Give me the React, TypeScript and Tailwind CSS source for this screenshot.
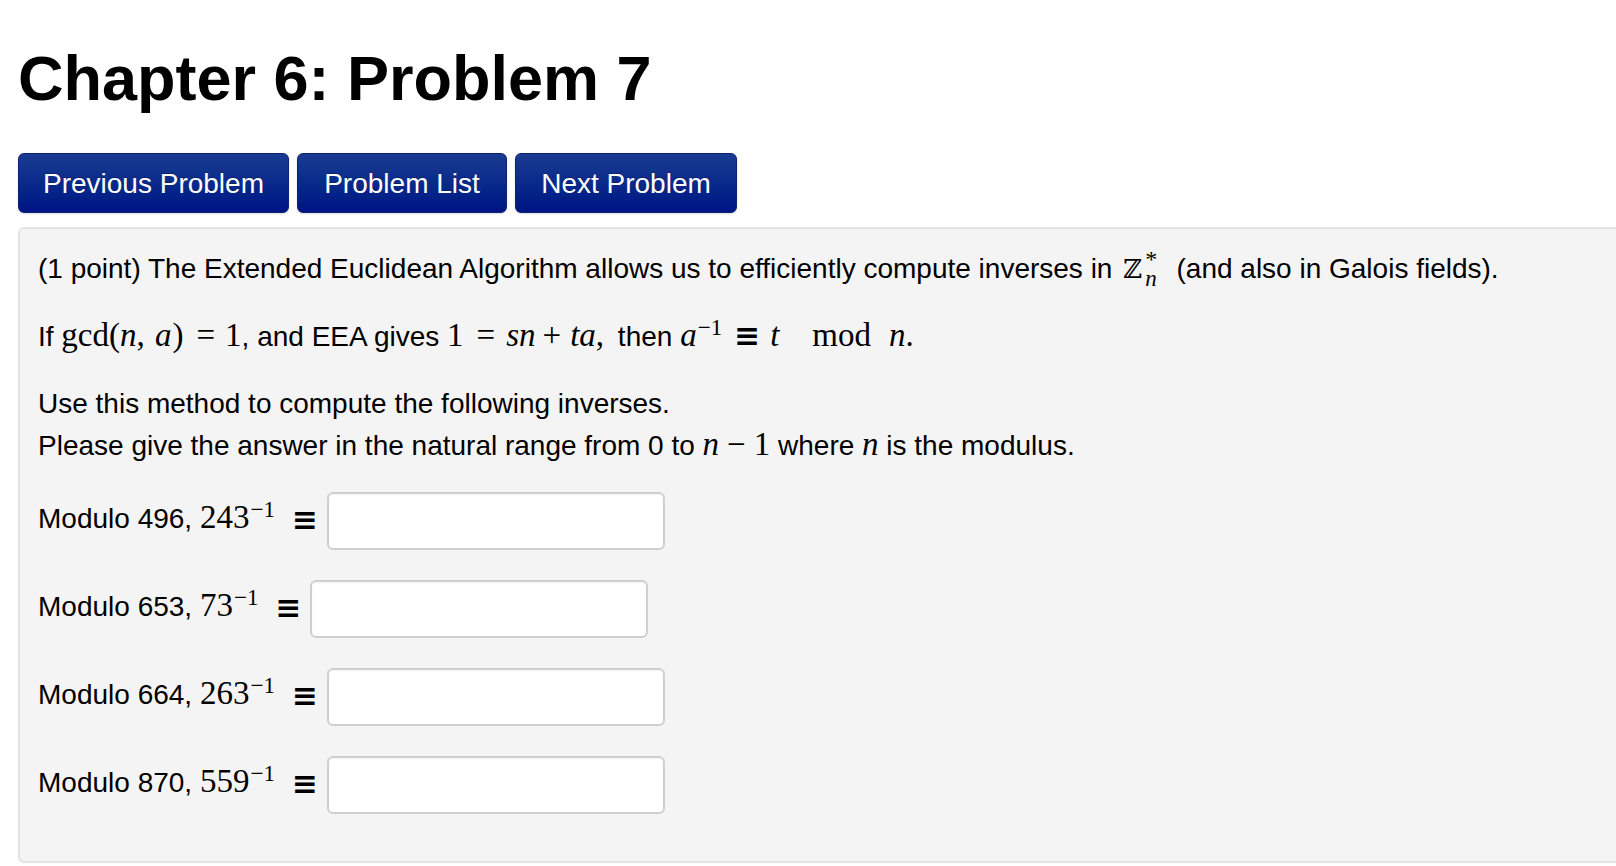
const sans = "font-['Liberation_Sans',Arial,Helvetica,sans-serif]";
const serif = "font-['Liberation_Serif','Times_New_Roman',serif] text-[33px]";
const italic = "font-['Liberation_Serif','Times_New_Roman',serif] text-[33px] italic";

function M({ children, className = "" }: { children: React.ReactNode; className?: string }) {
  return <span className={`${serif} ${className}`}>{children}</span>;
}

function I({ children, className = "" }: { children: React.ReactNode; className?: string }) {
  return <span className={`${italic} ${className}`}>{children}</span>;
}

function Sup({ children }: { children: React.ReactNode }) {
  return (
    <span className="relative -top-[11px] ml-[1px] font-['Liberation_Serif','Times_New_Roman',serif] text-[23px]">
      {children}
    </span>
  );
}

function Equiv({ className = "" }: { className?: string }) {
  return (
    <span className={`font-['DejaVu_Sans',sans-serif] text-[31px] font-bold ${className}`}>≡</span>
  );
}

function Row({ mod, base }: { mod: number; base: number }) {
  return (
    <div className="flex items-center">
      <span className="mb-[5px] whitespace-nowrap">
        Modulo {mod}, <M>{base}</M>
        <Sup>−1</Sup>
      </span>
      <Equiv className="ml-[17px] mb-[4px]" />
      <input
        type="text"
        className="ml-[9px] h-[58px] w-[338px] rounded-[6px] border-2 border-[#cfcfcf] bg-white shadow-[inset_0_1px_2px_rgba(0,0,0,0.06)] outline-none"
      />
    </div>
  );
}

export default function App() {
  return (
    <div className={`min-h-[866px] w-full overflow-hidden bg-white pl-[18px] text-black ${sans}`}>
      <h1 className="mt-[47px] text-[63px] font-bold leading-none">Chapter 6: Problem 7</h1>

      <div className="mt-[43px] flex gap-[8px]">
        {[
          { label: "Previous Problem", w: "w-[271px]" },
          { label: "Problem List", w: "w-[210px]" },
          { label: "Next Problem", w: "w-[222px]" },
        ].map((b) => (
          <button
            key={b.label}
            className={`${b.w} h-[60px] rounded-[6px] border border-[#0b2373] bg-linear-to-b from-[#1a3b90] to-[#001384] pt-[2px] text-[28px] text-white shadow-[0_1px_2px_rgba(0,0,0,0.15)] [text-shadow:0_-1px_0_rgba(0,0,0,0.25)]`}
          >
            {b.label}
          </button>
        ))}
      </div>

      <div className="mt-[14px] w-[1620px] rounded-[6px] border-2 border-[#e4e4e4] bg-[#f4f4f4] px-[18px] pt-[20px] pb-[47px] text-[28px] leading-[40px]">
        <p className="whitespace-nowrap">
          (1 point) The Extended Euclidean Algorithm allows us to efficiently compute inverses in{" "}
          <span className="ml-[3px] font-['DejaVu_Serif',serif] text-[26px]">ℤ</span>
          <span className="relative -top-[11px] ml-[3px] font-['Liberation_Serif',serif] text-[24px]">*</span>
          <span className="relative top-[8px] -ml-[12px] mr-[12px] font-['Liberation_Serif',serif] text-[23px] italic">n</span>{" "}
          (and also in Galois fields).
        </p>

        <p className="mt-[24px] whitespace-nowrap">
          If <M>gcd(</M>
          <I>n</I>
          <M className="mr-[2px]">, </M>
          <I>a</I>
          <M className="ml-[1px]">)</M>
          <span className="ml-[13px] mr-[10px] font-['Liberation_Serif',serif] text-[33px]">=</span>
          <M>1</M>, and EEA gives <M>1</M>
          <span className="ml-[13px] mr-[11px] font-['Liberation_Serif',serif] text-[33px]">=</span>
          <I>sn</I>
          <span className="ml-[7px] mr-[9px] font-['Liberation_Serif',serif] text-[33px]">+</span>
          <I>ta</I>
          <M className="mr-[6px]">,</M> then <I>a</I>
          <Sup>−1</Sup>
          <Equiv className="ml-[12px] mr-[10px]" />
          <I>t</I>
          <M className="ml-[33px]">mod</M>
          <I className="ml-[18px]">n</I>
          <M>.</M>
        </p>

        <p className="mt-[25px] whitespace-nowrap">
          Use this method to compute the following inverses.
          <br />
          Please give the answer in the natural range from 0 to <I>n</I>
          <span className="mx-[8px] font-['Liberation_Serif',serif] text-[33px]">−</span>
          <M>1</M> where <I>n</I> is the modulus.
        </p>

        <div className="mt-[26px] flex flex-col gap-[30px]">
          <Row mod={496} base={243} />
          <Row mod={653} base={73} />
          <Row mod={664} base={263} />
          <Row mod={870} base={559} />
        </div>
      </div>
    </div>
  );
}
